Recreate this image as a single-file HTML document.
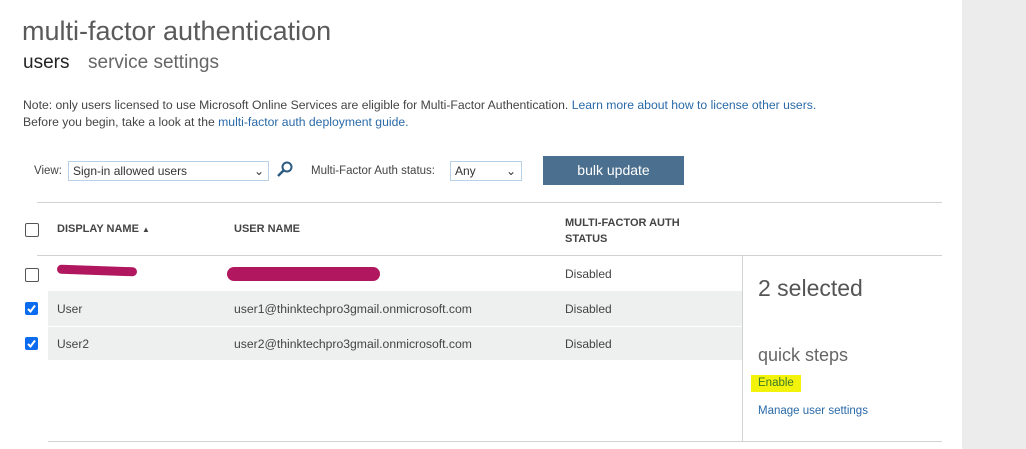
<!DOCTYPE html>
<html><head><style>
body{margin:0;width:1026px;height:449px;background:#fff;font-family:"Liberation Sans",sans-serif;position:relative;overflow:hidden;color:#333}
.a{position:absolute;white-space:nowrap}
.lnk{color:#2a6aa8}
.cb{position:absolute;left:25px;width:12px;height:12px;border:1px solid #555;border-radius:2px;background:#fff}
.cbc{position:absolute;left:25px;width:13px;height:13px;border-radius:2px;background:#0b6cf0}
.hd{font-size:11px;font-weight:bold;color:#444}
.td{font-size:12px;color:#444}
</style></head><body>
<div class="a" style="left:962px;top:0;width:64px;height:449px;background:#ececec"></div>
<div class="a" style="left:22px;top:16px;font-size:27px;color:#5a5a5a">multi-factor authentication</div>
<div class="a" style="left:23px;top:52px;font-size:19px;color:#222">users</div>
<div class="a" style="left:88px;top:52px;font-size:19px;color:#666">service settings</div>
<div class="a" style="left:23px;top:98px;font-size:12.2px;color:#444">Note: only users licensed to use Microsoft Online Services are eligible for Multi-Factor Authentication. <span class="lnk">Learn more about how to license other users.</span></div>
<div class="a" style="left:23px;top:115px;font-size:12.2px;color:#444">Before you begin, take a look at the <span class="lnk">multi-factor auth deployment guide.</span></div>
<div class="a" style="left:34px;top:165px;font-size:11.5px;color:#444">View:</div>
<div class="a" style="left:68px;top:161px;border:1px solid #b8d0e8;font-size:12px;line-height:19px;padding-left:4px;box-sizing:border-box;width:201px;height:20px">Sign-in allowed users<span style="position:absolute;right:4px;top:0">⌄</span></div>
<svg class="a" style="left:276px;top:160px" width="18" height="18" viewBox="0 0 18 18"><circle cx="11" cy="7" r="4.5" fill="none" stroke="#2d5a80" stroke-width="2"/><line x1="7.5" y1="10.5" x2="2" y2="16" stroke="#2d5a80" stroke-width="2.5"/></svg>
<div class="a" style="left:311px;top:165px;font-size:11.5px;color:#444">Multi-Factor Auth status:</div>
<div class="a" style="left:450px;top:161px;width:72px;height:20px;border:1px solid #b8d0e8;box-sizing:border-box;font-size:12px;line-height:19px;padding-left:4px">Any<span style="position:absolute;right:5px;top:0">⌄</span></div>
<div class="a" style="left:543px;top:156px;width:141px;height:29px;background:#4b6f8e;color:#fff;font-size:14px;line-height:29px;text-align:center">bulk update</div>
<div class="a" style="left:37px;top:202px;width:905px;height:1px;background:#cfd3d6"></div>
<div class="cb" style="top:223px"></div>
<div class="a hd" style="left:57px;top:223px">DISPLAY NAME <span style="font-size:8px">▲</span></div>
<div class="a hd" style="left:234px;top:223px">USER NAME</div>
<div class="a hd" style="left:565px;top:215px;line-height:16px">MULTI-FACTOR AUTH<br>STATUS</div>
<div class="a" style="left:37px;top:255px;width:905px;height:1px;background:#cfd3d6"></div>
<div class="cb" style="top:268px"></div>
<div class="a" style="left:57px;top:266px;width:80px;height:9px;background:#b0175f;border-radius:5px;transform:rotate(2deg)"></div>
<div class="a" style="left:227px;top:267px;width:153px;height:14px;background:#b0175f;border-radius:7px"></div>
<div class="a td" style="left:565px;top:267px">Disabled</div>
<div class="a" style="left:48px;top:291px;width:694px;height:35px;background:#edf0ef"></div>
<div class="a" style="left:48px;top:327px;width:694px;height:33px;background:#edf0ef"></div>
<div class="cbc" style="top:302px"><svg width="13" height="13"><path d="M3 7l2.5 2.5L10 3.5" stroke="#fff" stroke-width="2" fill="none"/></svg></div>
<div class="a td" style="left:57px;top:302px">User</div>
<div class="a td" style="left:234px;top:302px;font-size:12.2px">user1@thinktechpro3gmail.onmicrosoft.com</div>
<div class="a td" style="left:565px;top:302px">Disabled</div>
<div class="cbc" style="top:337px"><svg width="13" height="13"><path d="M3 7l2.5 2.5L10 3.5" stroke="#fff" stroke-width="2" fill="none"/></svg></div>
<div class="a td" style="left:57px;top:337px">User2</div>
<div class="a td" style="left:234px;top:337px;font-size:12.2px">user2@thinktechpro3gmail.onmicrosoft.com</div>
<div class="a td" style="left:565px;top:337px">Disabled</div>
<div class="a" style="left:742px;top:256px;width:1px;height:185px;background:#cfd3d6"></div>
<div class="a" style="left:48px;top:441px;width:894px;height:1px;background:#cfd3d6"></div>
<div class="a" style="left:758px;top:275px;font-size:23px;color:#555">2 selected</div>
<div class="a" style="left:758px;top:345px;font-size:18px;color:#666">quick steps</div>
<div class="a" style="left:751px;top:375px;width:50px;height:17px;background:#f2f20a"></div>
<div class="a" style="left:758px;top:377px;font-size:11.5px;color:#3b7a2a">Enable</div>
<div class="a lnk" style="left:758px;top:405px;font-size:11.5px">Manage user settings</div>
</body></html>
